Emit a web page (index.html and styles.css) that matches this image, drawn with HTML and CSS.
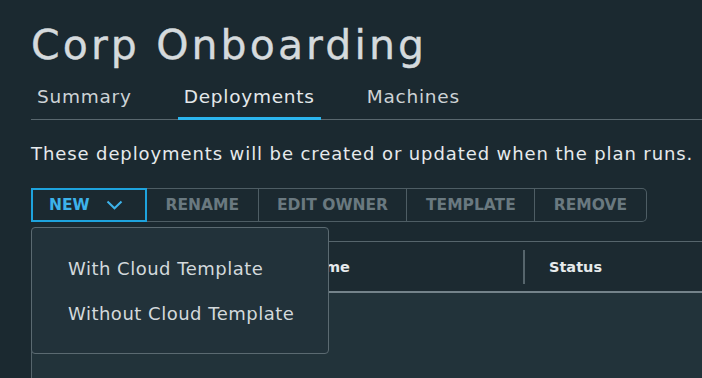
FILE: index.html
```html
<!DOCTYPE html>
<html>
<head>
<meta charset="utf-8">
<link rel="stylesheet" href="styles.css">
</head>
<body>
<div class="page">
  <h1 class="title">Corp Onboarding</h1>
  <nav class="tabs">
    <div class="tab">Summary</div>
    <div class="tab active">Deployments</div>
    <div class="tab">Machines</div>
  </nav>
  <p class="desc">These deployments will be created or updated when the plan runs.</p>
  <div class="toolbar">
    <div class="btn-group">
      <button class="btn btn-new">NEW
        <svg class="chev" width="17" height="10" viewBox="0 0 17 10"><path d="M1.5 1.5 L8.5 8.3 L15.5 1.5" fill="none" stroke="currentColor" stroke-width="2"/></svg>
      </button>
      <button class="btn">RENAME</button>
      <button class="btn">EDIT OWNER</button>
      <button class="btn">TEMPLATE</button>
      <button class="btn btn-last">REMOVE</button>
    </div>
    <div class="menu">
      <div class="menu-item">With Cloud Template</div>
      <div class="menu-item">Without Cloud Template</div>
    </div>
  </div>
  <div class="table">
    <div class="thead">
      <div class="th th-name">Name</div>
      <div class="th th-status">Status</div>
    </div>
    <div class="tbody"></div>
  </div>
</div>
</body>
</html>
```
FILE: styles.css
```css
html, body {
  margin: 0;
  padding: 0;
  background: #1b2930;
  height: 100%;
  overflow: hidden;
}
.page {
  padding-left: 31px;
  font-family: "DejaVu Sans", sans-serif;
  color: #e3e7e9;
}
.title {
  margin: 0;
  padding-top: 20px;
  font-size: 41px;
  line-height: 50px;
  font-weight: 400;
  color: #d5dadd;
  letter-spacing: 3.1px;
  -webkit-text-stroke: 0.4px #d5dadd;
}
.tabs {
  display: flex;
  gap: 40px;
  border-bottom: 1px solid #59676e;
  margin-top: 15px;
}
.tab {
  padding: 0 6px 8px 6px;
  font-size: 18.5px;
  line-height: 24px;
  letter-spacing: 0.75px;
  color: #cdd3d6;
  border-bottom: 3px solid transparent;
  margin-bottom: -1px;
}
.tab.active {
  border-bottom-color: #2bb5ee;
  color: #e4e8ea;
}
.desc {
  margin: 22px 0 0 0;
  font-size: 18px;
  line-height: 24px;
  letter-spacing: 0.9px;
  color: #e6eaec;
}
.toolbar {
  position: relative;
  margin-top: 22px;
}
.btn-group {
  display: flex;
}
.btn {
  font-family: inherit;
  background: transparent;
  border: 1px solid #4e5d64;
  border-left: none;
  height: 34px;
  padding: 0 18.5px;
  font-size: 15.5px;
  font-weight: 700;
  letter-spacing: 0;
  color: #6a7980;
  display: flex;
  align-items: center;
  margin: 0;
}
.btn-new {
  border: 2px solid #1ea3dd;
  color: #3db3ea;
  width: 116px;
  justify-content: flex-start;
  padding-left: 16px;
  gap: 16px;
}
.chev { display: block; }
.btn-last {
  border-radius: 0 5px 5px 0;
}
.menu {
  position: absolute;
  left: 0;
  top: 39px;
  width: 298px;
  height: 127px;
  box-sizing: border-box;
  background: #22323a;
  border: 1px solid #5b6a71;
  border-radius: 4px;
  padding-top: 29px;
  z-index: 2;
}
.menu-item {
  padding-left: 36px;
  font-size: 18px;
  line-height: 24px;
  letter-spacing: 0.5px;
  margin-bottom: 21px;
  color: #d3d9dc;
}
.table {
  margin-top: 19px;
  border-left: 1px solid #56656c;
  border-top: 1px solid #56656c;
  background: #22333a;
  height: 136px;
}
.thead {
  display: flex;
  align-items: center;
  height: 49px;
  background: #1c2a31;
  border-bottom: 2px solid #74838a;
}
.th {
  font-size: 14.5px;
  font-weight: 700;
  color: #e6eaec;
}
.th-name {
  width: 220px;
  padding-left: 271px;
  height: 34px;
  line-height: 34px;
  border-right: 2px solid #56656c;
}
.th-status {
  padding-left: 24px;
}
```
